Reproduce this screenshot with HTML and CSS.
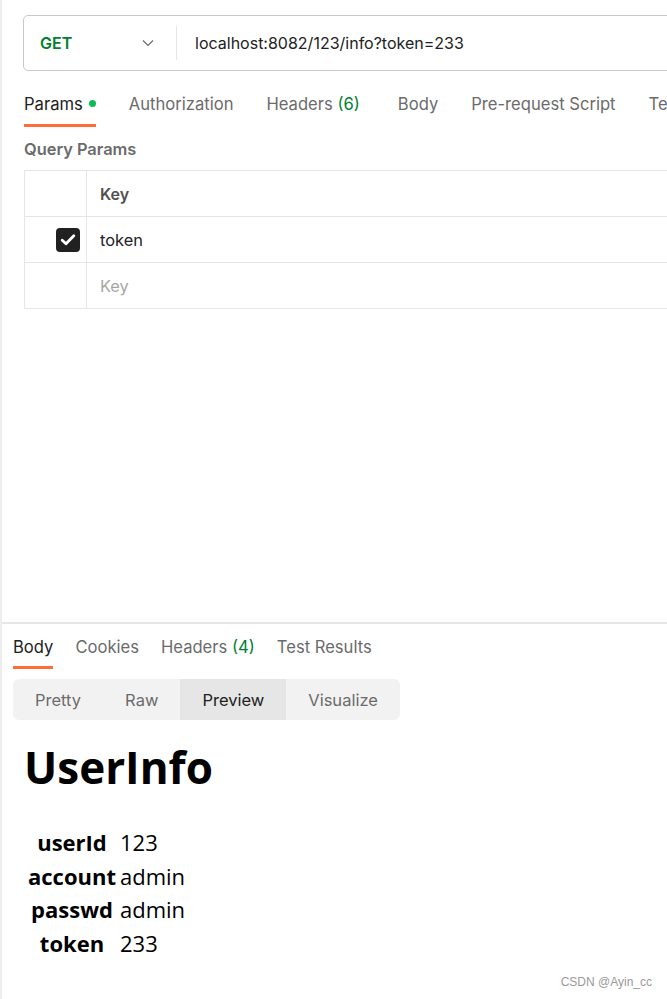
FILE: index.html
```html
<!DOCTYPE html>
<html lang="en">
<head>
    <meta charset="UTF-8">
    <title>Postman</title>
    <link rel="stylesheet" href="styles.css">
</head>
<body>
<div class="app">
    <div class="request">
        <div class="url-bar">
            <div class="method">
                <span class="method-name">GET</span>
                <svg class="chevron" width="12" height="8" viewBox="0 0 12 8"><path d="M1 1.5 L6 6.5 L11 1.5" fill="none" stroke="#6b6b6b" stroke-width="1.2"/></svg>
            </div>
            <div class="url">localhost:8082/123/info?token=233</div>
        </div>

        <div class="tabs">
            <span class="tab active">Params<span class="dot"></span></span>
            <span class="tab">Authorization</span>
            <span class="tab">Headers <span class="count">(6)</span></span>
            <span class="tab wide">Body</span>
            <span class="tab">Pre-request Script</span>
            <span class="tab">Tests</span>
        </div>

        <div class="section-title">Query Params</div>

        <div class="params">
            <div class="row head">
                <div class="check-cell"></div>
                <div class="key-cell">Key</div>
            </div>
            <div class="row">
                <div class="check-cell">
                    <span class="checkbox">
                        <svg width="16" height="14" viewBox="0 0 16 14"><path d="M2.2 7.2 L6 10.8 L13.8 2.8" fill="none" stroke="#fff" stroke-width="2.8" stroke-linecap="round" stroke-linejoin="round"/></svg>
                    </span>
                </div>
                <div class="key-cell value">token</div>
            </div>
            <div class="row">
                <div class="check-cell"></div>
                <div class="key-cell placeholder">Key</div>
            </div>
        </div>
    </div>

    <div class="response">
        <div class="tabs small">
            <span class="tab active">Body</span>
            <span class="tab">Cookies</span>
            <span class="tab">Headers <span class="count">(4)</span></span>
            <span class="tab">Test Results</span>
        </div>

        <div class="segmented">
            <span class="seg">Pretty</span>
            <span class="seg">Raw</span>
            <span class="seg selected">Preview</span>
            <span class="seg">Visualize</span>
        </div>

        <div class="preview">
            <h1>UserInfo</h1>
            <table>
                <tr><th>userId</th><td>123</td></tr>
                <tr><th>account</th><td>admin</td></tr>
                <tr><th>passwd</th><td>admin</td></tr>
                <tr><th>token</th><td>233</td></tr>
            </table>
        </div>
    </div>

    <div class="watermark">CSDN @Ayin_cc</div>
</div>
</body>
</html>
```

FILE: styles.css
```css
body
{
    margin: 0;
    font-family: Inter, "Noto Sans", sans-serif;
    color: #212121;
    background: #fff;
}
.app
{
    position: relative;
    height: 999px;
    border-left: 2px solid #ededed;
    overflow: hidden;
}

/* request part */
.request
{
    height: 624px;
    padding: 15px 0 0 21px;
    box-sizing: border-box;
    border-bottom: 2px solid #e6e6e6;
}
.url-bar
{
    display: flex;
    align-items: center;
    height: 56px;
    margin-right: -20px;
    border: 1px solid #c8c8c8;
    border-radius: 5px;
    box-sizing: border-box;
}
.method
{
    display: flex;
    align-items: center;
    justify-content: space-between;
    width: 114px;
    padding: 0 22px 0 16px;
    border-right: 1px solid #e6e6e6;
    height: 34px;
}
.method-name
{
    color: #007f31;
    font-weight: 600;
    font-size: 16px;
}
.url
{
    padding-left: 18px;
    font-size: 16px;
}

.tabs
{
    display: flex;
    gap: 33px;
    margin-top: 17px;
    padding-left: 1px;
    font-size: 16.6px;
    white-space: nowrap;
}
.tab
{
    color: #6b6b6b;
    padding: 6px 0 10px;
    border-bottom: 3px solid transparent;
}
.tab.wide
{
    margin-left: 5px;
}
.tab.active
{
    color: #212121;
    border-bottom-color: #ff6c37;
}
.dot
{
    display: inline-block;
    width: 7px;
    height: 7px;
    margin-left: 6px;
    border-radius: 50%;
    background: #0cbb52;
    vertical-align: 3px;
}
.count
{
    color: #007f31;
}

.section-title
{
    margin-top: 12px;
    padding-left: 1px;
    font-size: 16.4px;
    font-weight: 600;
    color: #6b6b6b;
}
.params
{
    margin: 11px -20px 0 1px;
    border: 1px solid #e6e6e6;
}
.row
{
    display: flex;
    height: 45px;
    border-top: 1px solid #e6e6e6;
}
.row.head
{
    border-top: none;
}
.check-cell
{
    display: flex;
    align-items: center;
    justify-content: flex-end;
    width: 62px;
    padding-right: 6px;
    box-sizing: border-box;
    border-right: 1px solid #e6e6e6;
}
.key-cell
{
    display: flex;
    align-items: center;
    padding-left: 13px;
    font-size: 16.4px;
}
.row.head .key-cell
{
    font-size: 16px;
    font-weight: 600;
    color: #505050;
}
.placeholder
{
    color: #a6a6a6;
}
.checkbox
{
    display: flex;
    align-items: center;
    justify-content: center;
    width: 24px;
    height: 24px;
    border-radius: 4px;
    background: #212121;
}

/* response part */
.response
{
    padding-left: 11px;
}
.tabs.small
{
    margin-top: 7px;
    gap: 22px;
    padding-left: 0;
}
.tabs.small .tab
{
    padding-bottom: 9px;
}
.segmented
{
    display: inline-flex;
    height: 41px;
    margin-top: 10px;
    background: #f2f2f2;
    border-radius: 6px;
    overflow: hidden;
}
.seg
{
    display: flex;
    align-items: center;
    padding: 0 22px;
    font-size: 16.5px;
    color: #6b6b6b;
}
.seg.selected
{
    background: #e6e6e6;
    color: #212121;
}

.preview
{
    padding-left: 11px;
    font-family: "Open Sans", "Noto Sans", sans-serif;
    color: #000;
}
.preview h1
{
    margin: 17px 0 28px;
    font-size: 44px;
    font-weight: 700;
    line-height: 60px;
}
.preview table
{
    margin-left: 1px;
    border-spacing: 2px;
    font-size: 22px;
}
.preview th,
.preview td
{
    padding: 1px;
    line-height: 29.7px;
}
.preview td
{
    text-align: left;
}

.watermark
{
    position: absolute;
    right: 15px;
    bottom: 10px;
    font-family: "Liberation Sans", sans-serif;
    font-size: 12px;
    color: #9a9a9a;
}
```
